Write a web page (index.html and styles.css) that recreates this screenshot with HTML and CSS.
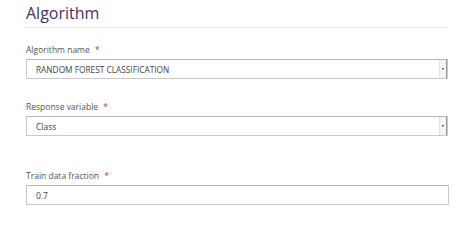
FILE: index.html
```html
<!DOCTYPE html>
<html lang="en">
<head>
  <meta charset="UTF-8">
  <title>Algorithm</title>
  <link rel="stylesheet" href="styles.css">
</head>
<body>
<div class="panel">
  <h2 class="title">Algorithm</h2>

  <div class="field">
    <label>Algorithm name <span class="req">*</span></label>
    <div class="select">
      <span class="value upper">RANDOM FOREST CLASSIFICATION</span>
      <span class="arrow"></span>
    </div>
  </div>

  <div class="field">
    <label>Response variable <span class="req">*</span></label>
    <div class="select">
      <span class="value">Class</span>
      <span class="arrow"></span>
    </div>
  </div>

  <div class="field">
    <label>Train data fraction <span class="req">*</span></label>
    <div class="input">0.7</div>
  </div>
</div>
</body>
</html>
```

FILE: styles.css
```css
body {
  margin: 0;
  background-color: #fff;
  font-family: "Open Sans", "Noto Sans", sans-serif;
}
.panel {
  width: 422px;
  padding: 3px 0 0 26px;
}
.title {
  margin: 0;
  padding-bottom: 4px;
  font-size: 16px;
  font-weight: 400;
  line-height: 20px;
  color: #4a2f5c;
  border-bottom: 1px solid #ececec;
}
.field {
  margin-top: 16px;
}
.field + .field {
  margin-top: 22px;
}
.field:last-child {
  margin-top: 34px;
}
label {
  display: block;
  font-size: 8.5px;
  line-height: 12px;
  color: #555;
  margin-bottom: 3px;
}
.req {
  color: #c2334d;
  margin-left: 3px;
}
.select, .input {
  display: flex;
  align-items: center;
  height: 18px;
  border: 1px solid #c8c8c8;
  border-top-color: #b8b8b8;
  font-size: 8.5px;
  color: #444;
}
.value {
  flex: 1;
  padding-left: 9px;
}
.upper {
  font-size: 8.3px;
}
.arrow {
  width: 6px;
  height: 18px;
  background-color: #f4f4f4;
  border-left: 1px solid #e2e2e2;
  border-right: 1px solid #999;
  position: relative;
}
/* tiny triangle of the old style dropdown */
.arrow::after {
  content: "";
  position: absolute;
  left: 2px;
  top: 8px;
  border-left: 1.5px solid transparent;
  border-right: 1.5px solid transparent;
  border-top: 2px solid #222;
}
.input {
  padding-left: 9px;
  width: 412px;
}
```
